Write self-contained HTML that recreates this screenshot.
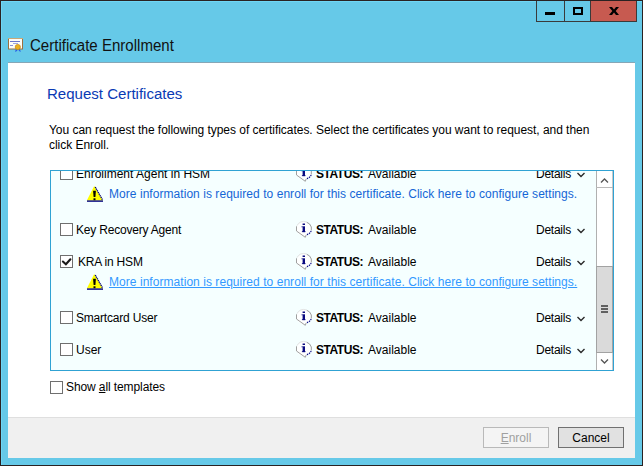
<!DOCTYPE html>
<html><head><meta charset="utf-8">
<style>
*{margin:0;padding:0;box-sizing:border-box}
html,body{width:643px;height:466px;overflow:hidden;background:#66c9e8}
body{position:relative;font-family:"Liberation Sans",sans-serif;font-size:12px;color:#000}
.abs{position:absolute}
#frame{left:0;top:0;width:643px;height:466px;border:1px solid #2a2222;background:#66c9e8}
#hl{left:1px;top:1px;width:641px;height:464px;border-top:1px solid #6fd6f5;border-left:1px solid #6fd6f5}
.cap{top:1px;height:21px;border:1px solid #3a3a3a;border-top:none}
#bmin{left:536px;width:29px;background:#66c9e8}
#bmax{left:564px;width:27px;background:#66c9e8}
#bclose{left:590px;width:47px;background:#c75a50}
.t{white-space:nowrap;line-height:1}
#title{left:30px;top:38px;font-size:15.6px;color:#111;transform:scaleX(0.965);transform-origin:0 0}
#content{left:8px;top:62px;width:627px;height:396px;background:#fff;border-top:1px solid #86a6b6}
#footer{left:8px;top:417px;width:627px;height:41px;background:#f0f0f0;border-top:1px solid #dfdfdf}
#h1{left:47px;top:86px;font-size:15.5px;color:#0a3ab4;transform:scaleX(0.97);transform-origin:0 0}
#p1{left:49px;top:123px;font-size:12px;line-height:15px;color:#000;letter-spacing:-0.04px;white-space:nowrap}
#list{left:50px;top:170px;width:564px;height:201px;border:1px solid #30a2d3;background:#f5ffff;overflow:hidden}
.cb{width:13px;height:13px;border:1px solid #6f6f6f;background:#fff}
.lbl{font-size:12px;color:#000}
.link{font-size:12px;color:#1466d6;letter-spacing:0.05px}
.link.hov{color:#3399ff;text-decoration:underline}
.st{font-size:12px}
.st b{font-weight:bold;letter-spacing:-0.45px}
.det{font-size:12px;letter-spacing:-0.25px}
#sb{left:545px;top:0;width:18px;height:199px;background:#fff;border-left:1px solid #b5b5b5}
.btn{top:427px;height:21px;width:66px;font-size:12px;text-align:center;line-height:19px;padding-top:1px}
#enroll{left:483px;border:1px solid #b9b9b9;background:#f4f4f4;color:#a0a0a0}
#cancel{left:558px;border:1px solid #707070;background:#e1e1e1;color:#000}
</style></head>
<body>
<div id="frame" class="abs"></div>
<div id="hl" class="abs"></div>
<div id="bmin" class="abs cap"><div class="abs" style="left:8px;top:11px;width:10px;height:3px;background:#000"></div></div>
<div id="bmax" class="abs cap"><div class="abs" style="left:8px;top:6px;width:10px;height:8px;border:2px solid #000"></div></div>
<div id="bclose" class="abs cap"><svg class="abs" style="left:18px;top:6px" width="10" height="8" viewBox="0 0 10 8"><path d="M0 0 L3 0 L5 2.6 L7 0 L10 0 L6.7 4 L10 8 L7 8 L5 5.4 L3 8 L0 8 L3.3 4 Z" fill="#000"/></svg></div>

<svg class="abs" style="left:8px;top:37px" width="16" height="16" viewBox="0 0 16 16">
<rect x="0.5" y="1.5" width="14" height="10.5" fill="#fdfdf8" stroke="#9c7040"/>
<line x1="0" y1="1.5" x2="15" y2="1.5" stroke="#c8a878"/>
<line x1="2" y1="4.5" x2="12" y2="4.5" stroke="#6c74cc"/>
<line x1="5" y1="6.5" x2="10" y2="6.5" stroke="#a0a6e0"/>
<line x1="2" y1="8.5" x2="5" y2="8.5" stroke="#8a90d8"/>
<path d="M8 11.5 L7 15 L9 14 L9.8 12.5 Z M10.4 12.5 L11 14 L12.8 15 L11.8 11.5 Z" fill="#2a62e8"/>
<circle cx="9.8" cy="10" r="2.6" fill="#eab020" stroke="#c88a10" stroke-width="0.7"/>
</svg>
<div id="title" class="abs t">Certificate Enrollment</div>

<div id="content" class="abs"></div>
<div id="footer" class="abs"></div>
<div id="h1" class="abs t">Request Certificates</div>
<div id="p1" class="abs">You can request the following types of certificates. Select the certificates you want to request, and then<br>click Enroll.</div>

<div id="list" class="abs">
<div class="abs cb" style="left:9px;top:-4px"></div>
<div class="abs t lbl" style="left:25px;top:-3.2px">Enrollment Agent in HSM</div>
<svg class="abs" style="left:243px;top:-7px" width="20" height="20"><circle cx="9.9" cy="9" r="7.2" fill="#fff"/><path d="M2.5 6.3 L2.5 11 L11.3 17.3 L12.2 14.9" stroke="#a0a0a0" fill="none" stroke-width="1"/><path d="M3 5.6 A7.2 7.2 0 0 1 12 1.9" stroke="#e2e2e2" fill="none" stroke-width="1"/><path d="M12.6 2.2 A7.2 7.2 0 0 1 17.3 7 L17.3 10.5" stroke="#9c9c9c" fill="none" stroke-width="1"/><path d="M17.2 11 A7.2 7.2 0 0 1 12.2 14.8" fill="none" stroke="#10108a" stroke-width="1.2" stroke-dasharray="1.3 0.9"/><rect x="8.6" y="3.5" width="2.4" height="1.5" fill="#0a0a80"/><rect x="8.6" y="6.3" width="2.4" height="5.8" fill="#0a0a80"/><rect x="7.6" y="6.3" width="1" height="1" fill="#0a0a80"/><rect x="7.9" y="11.2" width="3.6" height="0.9" fill="#0a0a80"/></svg>
<div class="abs t st" style="left:265px;top:-3.2px"><b>STATUS:</b></div>
<div class="abs t st" style="left:317px;top:-3.2px">Available</div>
<div class="abs t det" style="left:485px;top:-3.2px">Details</div>
<svg class="abs" style="left:526px;top:1px" width="8" height="6" viewBox="0 0 8 6"><path d="M0.5 1 L4 4.5 L7.5 1" fill="none" stroke="#2a2a2a" stroke-width="1.4"/></svg>
<svg class="abs" style="left:34px;top:13px" width="20" height="20"><path d="M9.2 2 L17.8 16.6 L1.8 16.6 Z" fill="#ffff00"/><path d="M10.2 3 L17.6 16" stroke="#000080" stroke-width="1.3" stroke-dasharray="1.3 0.6"/><rect x="2" y="16.4" width="16" height="1.4" fill="#000080"/><path d="M8.1 6.8 L10.9 6.8 L10.4 12.9 L8.6 12.9 Z" fill="#000"/><rect x="8.5" y="14.3" width="2" height="1.9" fill="#000"/></svg>
<div class="abs t link" style="left:58px;top:17.3px">More information is required to enroll for this certificate. Click here to configure settings.</div>
<div class="abs cb" style="left:9px;top:52px"></div>
<div class="abs t lbl" style="left:25px;top:52.8px;letter-spacing:-0.2px">Key Recovery Agent</div>
<svg class="abs" style="left:243px;top:49px" width="20" height="20"><circle cx="9.9" cy="9" r="7.2" fill="#fff"/><path d="M2.5 6.3 L2.5 11 L11.3 17.3 L12.2 14.9" stroke="#a0a0a0" fill="none" stroke-width="1"/><path d="M3 5.6 A7.2 7.2 0 0 1 12 1.9" stroke="#e2e2e2" fill="none" stroke-width="1"/><path d="M12.6 2.2 A7.2 7.2 0 0 1 17.3 7 L17.3 10.5" stroke="#9c9c9c" fill="none" stroke-width="1"/><path d="M17.2 11 A7.2 7.2 0 0 1 12.2 14.8" fill="none" stroke="#10108a" stroke-width="1.2" stroke-dasharray="1.3 0.9"/><rect x="8.6" y="3.5" width="2.4" height="1.5" fill="#0a0a80"/><rect x="8.6" y="6.3" width="2.4" height="5.8" fill="#0a0a80"/><rect x="7.6" y="6.3" width="1" height="1" fill="#0a0a80"/><rect x="7.9" y="11.2" width="3.6" height="0.9" fill="#0a0a80"/></svg>
<div class="abs t st" style="left:265px;top:52.8px"><b>STATUS:</b></div>
<div class="abs t st" style="left:317px;top:52.8px">Available</div>
<div class="abs t det" style="left:485px;top:52.8px">Details</div>
<svg class="abs" style="left:526px;top:57px" width="8" height="6" viewBox="0 0 8 6"><path d="M0.5 1 L4 4.5 L7.5 1" fill="none" stroke="#2a2a2a" stroke-width="1.4"/></svg>
<div class="abs cb" style="left:9px;top:84px"><svg class="abs" style="left:0;top:0" width="11" height="11" viewBox="0 0 11 11"><path d="M1.9 5.5 L4.9 8.3 L9.4 3.3" fill="none" stroke="#1a1a1a" stroke-width="2.1" stroke-linecap="round"/></svg></div>
<div class="abs t lbl" style="left:27px;top:84.8px;letter-spacing:-0.2px">KRA in HSM</div>
<svg class="abs" style="left:243px;top:81px" width="20" height="20"><circle cx="9.9" cy="9" r="7.2" fill="#fff"/><path d="M2.5 6.3 L2.5 11 L11.3 17.3 L12.2 14.9" stroke="#a0a0a0" fill="none" stroke-width="1"/><path d="M3 5.6 A7.2 7.2 0 0 1 12 1.9" stroke="#e2e2e2" fill="none" stroke-width="1"/><path d="M12.6 2.2 A7.2 7.2 0 0 1 17.3 7 L17.3 10.5" stroke="#9c9c9c" fill="none" stroke-width="1"/><path d="M17.2 11 A7.2 7.2 0 0 1 12.2 14.8" fill="none" stroke="#10108a" stroke-width="1.2" stroke-dasharray="1.3 0.9"/><rect x="8.6" y="3.5" width="2.4" height="1.5" fill="#0a0a80"/><rect x="8.6" y="6.3" width="2.4" height="5.8" fill="#0a0a80"/><rect x="7.6" y="6.3" width="1" height="1" fill="#0a0a80"/><rect x="7.9" y="11.2" width="3.6" height="0.9" fill="#0a0a80"/></svg>
<div class="abs t st" style="left:265px;top:84.8px"><b>STATUS:</b></div>
<div class="abs t st" style="left:317px;top:84.8px">Available</div>
<div class="abs t det" style="left:485px;top:84.8px">Details</div>
<svg class="abs" style="left:526px;top:89px" width="8" height="6" viewBox="0 0 8 6"><path d="M0.5 1 L4 4.5 L7.5 1" fill="none" stroke="#2a2a2a" stroke-width="1.4"/></svg>
<svg class="abs" style="left:34px;top:101px" width="20" height="20"><path d="M9.2 2 L17.8 16.6 L1.8 16.6 Z" fill="#ffff00"/><path d="M10.2 3 L17.6 16" stroke="#000080" stroke-width="1.3" stroke-dasharray="1.3 0.6"/><rect x="2" y="16.4" width="16" height="1.4" fill="#000080"/><path d="M8.1 6.8 L10.9 6.8 L10.4 12.9 L8.6 12.9 Z" fill="#000"/><rect x="8.5" y="14.3" width="2" height="1.9" fill="#000"/></svg>
<div class="abs t link hov" style="left:58px;top:105.3px">More information is required to enroll for this certificate. Click here to configure settings.</div>
<div class="abs cb" style="left:9px;top:140px"></div>
<div class="abs t lbl" style="left:25px;top:140.8px;letter-spacing:-0.2px">Smartcard User</div>
<svg class="abs" style="left:243px;top:137px" width="20" height="20"><circle cx="9.9" cy="9" r="7.2" fill="#fff"/><path d="M2.5 6.3 L2.5 11 L11.3 17.3 L12.2 14.9" stroke="#a0a0a0" fill="none" stroke-width="1"/><path d="M3 5.6 A7.2 7.2 0 0 1 12 1.9" stroke="#e2e2e2" fill="none" stroke-width="1"/><path d="M12.6 2.2 A7.2 7.2 0 0 1 17.3 7 L17.3 10.5" stroke="#9c9c9c" fill="none" stroke-width="1"/><path d="M17.2 11 A7.2 7.2 0 0 1 12.2 14.8" fill="none" stroke="#10108a" stroke-width="1.2" stroke-dasharray="1.3 0.9"/><rect x="8.6" y="3.5" width="2.4" height="1.5" fill="#0a0a80"/><rect x="8.6" y="6.3" width="2.4" height="5.8" fill="#0a0a80"/><rect x="7.6" y="6.3" width="1" height="1" fill="#0a0a80"/><rect x="7.9" y="11.2" width="3.6" height="0.9" fill="#0a0a80"/></svg>
<div class="abs t st" style="left:265px;top:140.8px"><b>STATUS:</b></div>
<div class="abs t st" style="left:317px;top:140.8px">Available</div>
<div class="abs t det" style="left:485px;top:140.8px">Details</div>
<svg class="abs" style="left:526px;top:145px" width="8" height="6" viewBox="0 0 8 6"><path d="M0.5 1 L4 4.5 L7.5 1" fill="none" stroke="#2a2a2a" stroke-width="1.4"/></svg>
<div class="abs cb" style="left:9px;top:172px"></div>
<div class="abs t lbl" style="left:25px;top:172.8px">User</div>
<svg class="abs" style="left:243px;top:169px" width="20" height="20"><circle cx="9.9" cy="9" r="7.2" fill="#fff"/><path d="M2.5 6.3 L2.5 11 L11.3 17.3 L12.2 14.9" stroke="#a0a0a0" fill="none" stroke-width="1"/><path d="M3 5.6 A7.2 7.2 0 0 1 12 1.9" stroke="#e2e2e2" fill="none" stroke-width="1"/><path d="M12.6 2.2 A7.2 7.2 0 0 1 17.3 7 L17.3 10.5" stroke="#9c9c9c" fill="none" stroke-width="1"/><path d="M17.2 11 A7.2 7.2 0 0 1 12.2 14.8" fill="none" stroke="#10108a" stroke-width="1.2" stroke-dasharray="1.3 0.9"/><rect x="8.6" y="3.5" width="2.4" height="1.5" fill="#0a0a80"/><rect x="8.6" y="6.3" width="2.4" height="5.8" fill="#0a0a80"/><rect x="7.6" y="6.3" width="1" height="1" fill="#0a0a80"/><rect x="7.9" y="11.2" width="3.6" height="0.9" fill="#0a0a80"/></svg>
<div class="abs t st" style="left:265px;top:172.8px"><b>STATUS:</b></div>
<div class="abs t st" style="left:317px;top:172.8px">Available</div>
<div class="abs t det" style="left:485px;top:172.8px">Details</div>
<svg class="abs" style="left:526px;top:177px" width="8" height="6" viewBox="0 0 8 6"><path d="M0.5 1 L4 4.5 L7.5 1" fill="none" stroke="#2a2a2a" stroke-width="1.4"/></svg>
<div class="abs" style="left:545px;top:0;width:17px;height:199px;background:#fff;border-left:1px solid #b0b0b0;border-right:1px solid #c8c8c8"></div>
<div class="abs" style="left:545px;top:16px;width:17px;height:1px;background:#b9b9b9"></div>
<svg class="abs" style="left:549px;top:6px" width="9" height="7" viewBox="0 0 9 7"><path d="M1 5.5 L4.5 2 L8 5.5" fill="none" stroke="#555" stroke-width="1.3"/></svg>
<div class="abs" style="left:545px;top:95px;width:17px;height:87px;background:#dadada;border:1px solid #a2a2a2"></div>
<div class="abs" style="left:550px;top:134px;width:7px;height:2px;background:#606060"></div>
<div class="abs" style="left:550px;top:137px;width:7px;height:2px;background:#606060"></div>
<div class="abs" style="left:550px;top:140px;width:7px;height:2px;background:#606060"></div>
<svg class="abs" style="left:549px;top:187px" width="9" height="7" viewBox="0 0 9 7"><path d="M1 1.5 L4.5 5 L8 1.5" fill="none" stroke="#555" stroke-width="1.3"/></svg>
</div>

<div class="abs cb" style="left:50px;top:381px"></div>
<div class="abs t lbl" style="left:66px;top:381px;letter-spacing:-0.1px">Show <u>a</u>ll templates</div>

<div id="enroll" class="abs btn"><u>E</u>nroll</div>
<div id="cancel" class="abs btn">Cancel</div>
</body></html>
